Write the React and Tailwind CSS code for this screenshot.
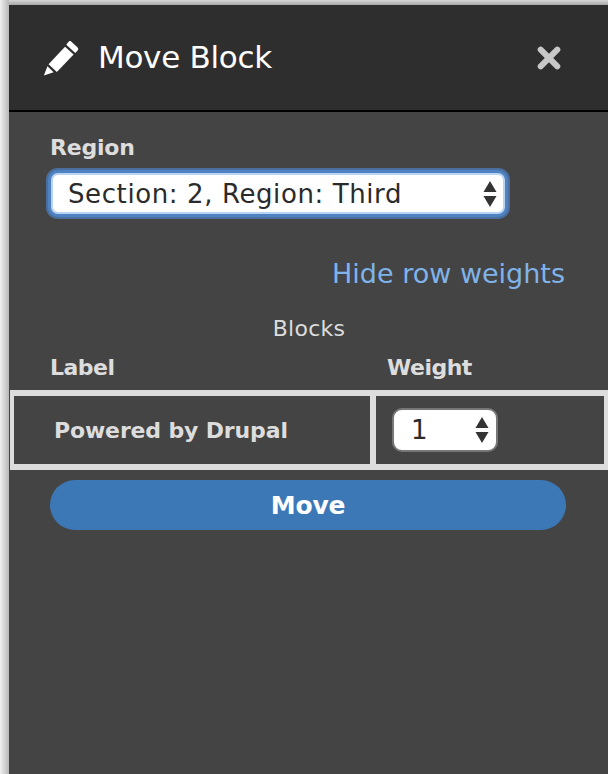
const font = { fontFamily: '"DejaVu Sans", "Open Sans", sans-serif' };

function Arrows() {
  return (
    <svg width="14" height="26" viewBox="0 0 14 26" className="fill-[#333]">
      <path d="M7 0 L13.5 11 L0.5 11 Z" />
      <path d="M0.5 15 L13.5 15 L7 26 Z" />
    </svg>
  );
}

export default function App() {
  return (
    <div style={font} className="flex w-[608px] h-[774px] overflow-hidden bg-[#444]">
      <div className="w-[9px] shrink-0 bg-gradient-to-r from-[#f0f0f0] to-[#b8b8b8]" />
      <div className="flex-1 flex flex-col min-w-0">
        <div className="h-[5px] shrink-0 bg-gradient-to-b from-[#d8d8d8] to-[#a8a8a8]" />
        <div className="h-[107px] shrink-0 flex items-center justify-between bg-[#2e2e2e] border-b-2 border-black pl-[34px] pr-[47px]">
          <div className="flex items-center gap-[18px]">
            <svg width="37" height="37" viewBox="1 4 31 31.500" className="fill-white">
              <path d="M24.5 6 L30 11 C31 12 31 13 30 14 L28.2 16 L20.6 9 L22 7 C22.8 5.800 23.600 5.300 24.500 6 Z" />
              <path d="M19.500 10.500 L26.800 17.300 L12.500 32 L5.500 25.500 Z" />
              <path d="M4.500 27.300 L9.800 32.300 L1.500 35 Z" />
            </svg>
            <h1 className="text-[31px] leading-none text-white tracking-[-0.3px]">Move Block</h1>
          </div>
          <svg width="24" height="24" viewBox="0 0 26 26" className="stroke-[#c8c8c8]">
            <path d="M4 4 L22 22 M22 4 L4 22" strokeWidth="6.500" strokeLinecap="round" fill="none" />
          </svg>
        </div>

        <div className="flex-1 pt-[21px] text-[#ddd]">
          <div className="pl-[41px]">
            <label className="block text-[22px] leading-[29px] font-bold tracking-[-0.2px]">Region</label>
            <div className="relative mt-[13px] w-[450px] h-[37px] ml-[3px] rounded-[5px] bg-white shadow-[0_0_0_2px_#b9d4f2,0_0_0_5px_#4f82c0,0_0_0_7px_#4a6f9e]">
              <select className="w-full h-full appearance-none bg-transparent outline-none pl-[15px] text-[26px] text-[#2b2b2b] tracking-[0.6px]">
                <option>Section: 2, Region: Third</option>
              </select>
              <div className="absolute right-[6px] top-[6px] pointer-events-none">
                <Arrows />
              </div>
            </div>
          </div>

          <div className="flex justify-end mt-[45px] pr-[43px]">
            <a href="#" className="text-[#7fb3ea] text-[27px] leading-[34px]">Hide row weights</a>
          </div>

          <table className="w-[598px] ml-[1px] mt-[23px] border-separate border-spacing-0 table-fixed">
            <caption className="text-[22px] leading-[30px] text-[#ddd] tracking-[0.25px]">Blocks</caption>
            <thead>
              <tr className="h-[46px] text-left text-[22px] font-bold tracking-[-0.5px]">
                <th className="w-[366px] pl-[40px] font-bold">Label</th>
                <th className="pl-[11px] font-bold">Weight</th>
              </tr>
            </thead>
            <tbody>
              <tr className="h-[80px]">
                <td className="border-y-[6px] border-l-[4px] border-r-[6px] border-[#ddd] pl-[40px] text-[22px] font-bold tracking-[-0.15px]">Powered by Drupal</td>
                <td className="border-y-[6px] border-r-[4px] border-[#ddd] pl-[16px]">
                  <div className="relative w-[106px] h-[44px] rounded-[10px] bg-white border-2 border-[#777]">
                    <select className="w-full h-full appearance-none bg-transparent outline-none pl-[17px] text-[26px] text-[#2b2b2b]">
                      <option>1</option>
                    </select>
                    <div className="absolute right-[7px] top-[7px] pointer-events-none">
                      <Arrows />
                    </div>
                  </div>
                </td>
              </tr>
            </tbody>
          </table>

          <button className="block w-[516px] h-[50px] ml-[41px] mt-[10px] pt-[2px] rounded-full bg-[#3d78b6] text-white text-[25px] font-bold tracking-[-0.2px]">
            Move
          </button>
        </div>
      </div>
    </div>
  );
}
